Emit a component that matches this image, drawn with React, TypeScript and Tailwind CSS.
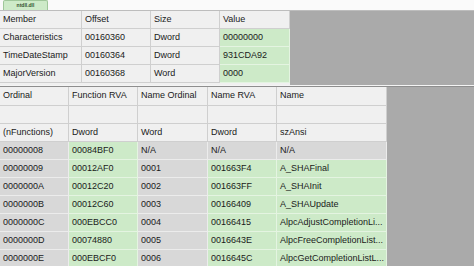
type Cell = { text: string; w: string; tone: "head" | "gray" | "green" };

const tones = {
  head: "bg-[#f0f0f0] border-[#cfcfcf]",
  gray: "bg-[#d8d8d8] border-[#ececec]",
  green: "bg-[#cdeac8] border-[#e4f4e1]",
};

function Row({ cells, h = "h-[18px]" }: { cells: Cell[]; h?: string }) {
  return (
    <div className={`flex ${h}`}>
      {cells.map((c, i) => (
        <div
          key={i}
          className={`${c.w} ${tones[c.tone]} shrink-0 border-r border-b flex items-center pl-[3px] whitespace-nowrap overflow-hidden`}
        >
          {c.text}
        </div>
      ))}
    </div>
  );
}

const t1w = ["w-[82px]", "w-[69px]", "w-[69px]", "w-[70px]"];
const t2w = ["w-[69px]", "w-[69px]", "w-[70px]", "w-[69px]", "w-[110px]"];

const members = [
  ["Characteristics", "00160360", "Dword", "00000000"],
  ["TimeDateStamp", "00160364", "Dword", "931CDA92"],
  ["MajorVersion", "00160368", "Word", "0000"],
];

const exports = [
  ["00000009", "00012AF0", "0001", "001663F4", "A_SHAFinal"],
  ["0000000A", "00012C20", "0002", "001663FF", "A_SHAInit"],
  ["0000000B", "00012C60", "0003", "00166409", "A_SHAUpdate"],
  ["0000000C", "000EBCC0", "0004", "00166415", "AlpcAdjustCompletionLi..."],
  ["0000000D", "00074880", "0005", "0016643E", "AlpcFreeCompletionList..."],
  ["0000000E", "000EBCF0", "0006", "0016645C", "AlpcGetCompletionListL..."],
];

export default function App() {
  return (
    <div
      className="w-[474px] h-[266px] overflow-hidden bg-[#aaaaaa] text-[9px] text-[#1a1a1a]"
      style={{ fontFamily: '"Liberation Sans", Arial, sans-serif' }}
    >
      {/* tab strip */}
      <div className="h-[11px] bg-[#fafafa] border-b border-[#bdbdbd] flex items-end">
        <div className="ml-[3px] w-[45px] h-[10px] bg-[#cdeac8] border border-b-0 border-[#9fc79a] rounded-t-[2px] flex items-center justify-center text-[5px] font-bold text-[#2f4f2c]">
          ntdll.dll
        </div>
      </div>

      {/* header members */}
      <div className="h-[72px]">
        <Row
          cells={["Member", "Offset", "Size", "Value"].map((t, i) => ({ text: t, w: t1w[i], tone: "head" }))}
        />
        {members.map((r, ri) => (
          <Row
            key={ri}
            cells={r.map((t, i) => ({ text: t, w: t1w[i], tone: i === 3 ? "green" : "head" }))}
          />
        ))}
      </div>

      {/* splitter */}
      <div className="h-[2px] flex">
        <div className="w-[290px] bg-[#f0f0f0]" />
      </div>
      <div className="h-[1px] bg-[#f4f4f4]" />
      <div className="h-[1px] bg-[#8e8e8e]" />

      {/* export functions */}
      <div>
        <Row
          h="h-[19px]"
          cells={["Ordinal", "Function RVA", "Name Ordinal", "Name RVA", "Name"].map((t, i) => ({ text: t, w: t2w[i], tone: "head" }))}
        />
        <Row cells={t2w.map((w) => ({ text: "", w, tone: "head" }))} />
        <Row
          cells={["(nFunctions)", "Dword", "Word", "Dword", "szAnsi"].map((t, i) => ({ text: t, w: t2w[i], tone: "head" }))}
        />
        <Row
          cells={["00000008", "00084BF0", "N/A", "N/A", "N/A"].map((t, i) => ({ text: t, w: t2w[i], tone: i === 1 ? "green" : "gray" }))}
        />
        {exports.map((r, ri) => (
          <Row
            key={ri}
            cells={r.map((t, i) => ({ text: t, w: t2w[i], tone: i === 0 || i === 2 ? "gray" : "green" }))}
          />
        ))}
      </div>
    </div>
  );
}
